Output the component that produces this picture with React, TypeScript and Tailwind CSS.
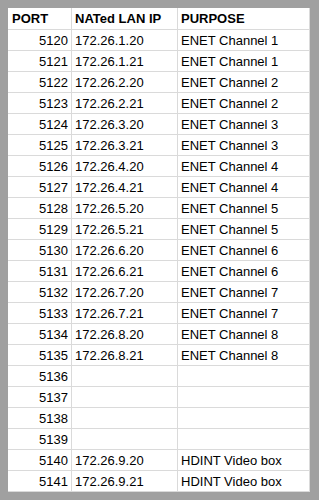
import React from "react";

const rows: [string, string, string][] = [
  ["5120", "172.26.1.20", "ENET Channel 1"],
  ["5121", "172.26.1.21", "ENET Channel 1"],
  ["5122", "172.26.2.20", "ENET Channel 2"],
  ["5123", "172.26.2.21", "ENET Channel 2"],
  ["5124", "172.26.3.20", "ENET Channel 3"],
  ["5125", "172.26.3.21", "ENET Channel 3"],
  ["5126", "172.26.4.20", "ENET Channel 4"],
  ["5127", "172.26.4.21", "ENET Channel 4"],
  ["5128", "172.26.5.20", "ENET Channel 5"],
  ["5129", "172.26.5.21", "ENET Channel 5"],
  ["5130", "172.26.6.20", "ENET Channel 6"],
  ["5131", "172.26.6.21", "ENET Channel 6"],
  ["5132", "172.26.7.20", "ENET Channel 7"],
  ["5133", "172.26.7.21", "ENET Channel 7"],
  ["5134", "172.26.8.20", "ENET Channel 8"],
  ["5135", "172.26.8.21", "ENET Channel 8"],
  ["5136", "", ""],
  ["5137", "", ""],
  ["5138", "", ""],
  ["5139", "", ""],
  ["5140", "172.26.9.20", "HDINT Video box"],
  ["5141", "172.26.9.21", "HDINT Video box"],
];

export default function App() {
  return (
    <div
      className="w-[319px] h-[500px] bg-[#a0a0a0] pt-2 pl-2 text-black text-[13px] leading-none"
      style={{ fontFamily: '"Liberation Sans", Arial, sans-serif' }}
    >
      <div className="w-[302px] bg-white flex flex-col">
        <div className="flex h-[22px] font-bold">
          <div className="w-[64px] border-r border-b border-[#dadada] pl-[4px] flex items-center">PORT</div>
          <div className="w-[106px] border-r border-b border-[#dadada] pl-[3px] flex items-center">NATed LAN IP</div>
          <div className="w-[132px] border-r border-b border-[#dadada] pl-[3px] flex items-center">PURPOSE</div>
        </div>
        {rows.map((r, i) => (
          <div key={i} className="flex h-[21px]">
            <div className="w-[64px] border-r border-b border-[#dadada] pr-[3px] flex items-center justify-end">{r[0]}</div>
            <div className="w-[106px] border-r border-b border-[#dadada] pl-[3px] flex items-center">{r[1]}</div>
            <div className="w-[132px] border-r border-b border-[#dadada] pl-[3px] flex items-center">{r[2]}</div>
          </div>
        ))}
      </div>
    </div>
  );
}
